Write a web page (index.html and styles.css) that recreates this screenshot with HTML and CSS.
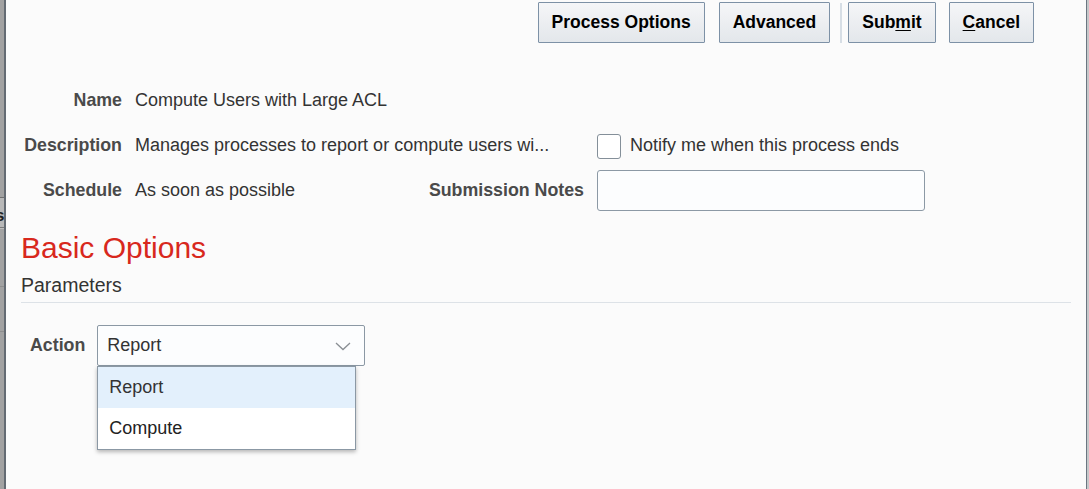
FILE: index.html
```html
<!DOCTYPE html>
<html lang="en">
<head>
<meta charset="utf-8">
<title>Compute Users with Large ACL</title>
<link rel="stylesheet" href="styles.css">
</head>
<body>
<div class="window">
  <div class="edge-left">
    <div class="edge-gap"></div>
    <div class="edge-row"><span class="edge-text">s</span></div>
    <div class="edge-row2"></div>
    <div class="edge-row3"></div>
    <div class="edge-row4"></div>
  </div>
  <main class="page">
    <div class="toolbar">
      <button class="btn">Process Options</button>
      <button class="btn btn-adv">Advanced</button>
      <span class="tb-sep"></span>
      <button class="btn">Sub<u>m</u>it</button>
      <button class="btn btn-cancel"><u>C</u>ancel</button>
    </div>

    <div class="form-grid">
      <span class="label">Name</span>
      <span class="value span-2">Compute Users with Large ACL</span>
      <span></span>

      <span class="label">Description</span>
      <span class="value span-2">Manages processes to report or compute users wi...</span>
      <label class="check"><span class="box"></span><span class="value">Notify me when this process ends</span></label>

      <span class="label">Schedule</span>
      <span class="value">As soon as possible</span>
      <span class="label">Submission Notes</span>
      <span class="text-input"></span>
    </div>

    <h1 class="section-title">Basic Options</h1>
    <h2 class="sub-title">Parameters</h2>

    <div class="param-row">
      <span class="label">Action</span>
      <div class="select-wrap">
        <div class="select">
          <span>Report</span>
          <svg class="chev" width="16" height="9" viewBox="0 0 16 9"><path d="M1 1 L8 7.5 L15 1" fill="none" stroke="#8a8f94" stroke-width="1.3"/></svg>
        </div>
        <ul class="listbox">
          <li class="opt active">Report</li>
          <li class="opt">Compute</li>
        </ul>
      </div>
    </div>
  </main>
  <div class="edge-right"></div>
</div>
</body>
</html>
```

FILE: styles.css
```css
* { box-sizing: border-box; }
html, body { margin: 0; padding: 0; }
body {
  font-family: "Liberation Sans", Arial, sans-serif;
  font-size: 18px;
  color: #333;
  background: #fbfbfb;
}
.window {
  display: flex;
  height: 489px;
  overflow: hidden;
}
.edge-left {
  width: 6px;
  flex: none;
  background: linear-gradient(to right, #a2a2a2 0, #a2a2a2 4px, #646b73 4px, #646b73 6px);
  display: flex;
  flex-direction: column;
  overflow: hidden;
}
.edge-gap { height: 197px; }
.edge-row {
  width: 4px;
  height: 31px;
  border-top: 1px solid #6f6f6f;
  border-bottom: 1px solid #7a7a7a;
  background: #b8b8b8;
  overflow: hidden;
  display: flex;
  align-items: center;
}
.edge-text {
  font-weight: bold;
  font-size: 17px;
  color: #222;
  margin-left: -5px;
  margin-top: 6px;
}
.edge-row2 { width: 4px; height: 58px; border-top: 1px solid #bdbdbd; }
.edge-row3 { width: 4px; height: 45px; border-top: 1px solid #8e8e8e; }
.edge-row4 { width: 4px; height: 1px; background: #8e8e8e; }

.edge-right {
  width: 3px;
  flex: none;
  background: linear-gradient(to right, #6b7681 0, #6b7681 1px, #c6c8ca 1px);
}
.page {
  flex: 1;
  padding: 0 15px;
  min-width: 0;
}
.toolbar {
  display: flex;
  justify-content: flex-end;
  align-items: flex-start;
  padding-top: 2px;
  padding-right: 37px;
}
.btn {
  height: 41px;
  padding: 0 13px;
  border: 1px solid #7d91a6;
  border-radius: 1px;
  background: linear-gradient(to bottom, #f5f6f8 0%, #eceef1 50%, #e3e7eb 100%);
  font-family: "Liberation Sans", Arial, sans-serif;
  font-size: 17.5px;
  font-weight: bold;
  color: #000;
  line-height: 1;
  cursor: pointer;
}
.btn u { text-decoration-thickness: 1px; text-underline-offset: 2px; }
.btn-adv { margin-left: 14px; }
.tb-sep {
  width: 2px;
  height: 40px;
  margin: 1px 6px 0 10px;
  background: #d7dee5;
}
.btn-cancel { margin-left: 13px; }

.form-grid {
  margin-top: 34.5px;
  display: grid;
  grid-template-columns: 101px 276px 160px 328px;
  grid-auto-rows: 45px;
  column-gap: 13px;
  align-items: center;
}
.label {
  font-weight: bold;
  font-size: 17.8px;
  color: #4a4a4a;
  text-align: right;
  white-space: nowrap;
}
.value {
  color: #333;
  white-space: nowrap;
}
.span-2 { grid-column: span 2; }
.check {
  display: flex;
  align-items: center;
  gap: 9px;
}
.box {
  width: 24px;
  height: 25px;
  margin-top: 3px;
  border: 1px solid #848f99;
  border-radius: 3px;
  background: #fff;
  flex: none;
}
.text-input {
  display: block;
  height: 41px;
  border: 1px solid #8c99a5;
  border-radius: 3px;
  background: #fcfdfe;
}

.section-title {
  margin: 17px 0 0;
  font-size: 30px;
  line-height: 36px;
  font-weight: normal;
  color: #d8281d;
}
.sub-title {
  margin: 7px 0 0;
  font-size: 19.5px;
  line-height: 24px;
  font-weight: normal;
  color: #333;
  padding-bottom: 5px;
  border-bottom: 1px solid #dde2e7;
}

.param-row {
  margin-top: 22.5px;
  display: flex;
  align-items: center;
  padding-left: 9px;
  gap: 12px;
}
.select-wrap {
  position: relative;
}
.select {
  width: 268px;
  height: 41px;
  border: 1px solid #8b98a4;
  border-radius: 2px;
  background: #fcfdfe;
  display: flex;
  align-items: center;
  justify-content: space-between;
  padding: 0 13px 0 9px;
  color: #333;
}
.chev { display: block; margin-top: 2px; }
.listbox {
  position: absolute;
  top: 41px;
  left: 0;
  width: 259px;
  margin: 0;
  padding: 0;
  list-style: none;
  background: #fff;
  border: 1px solid #8b98a4;
  box-shadow: 0 2px 4px rgba(0, 0, 0, 0.28);
}
.opt {
  height: 41px;
  display: flex;
  align-items: center;
  padding-left: 11px;
  color: #222;
}
.opt.active {
  background: #e3f0fc;
  color: #333;
}
```
